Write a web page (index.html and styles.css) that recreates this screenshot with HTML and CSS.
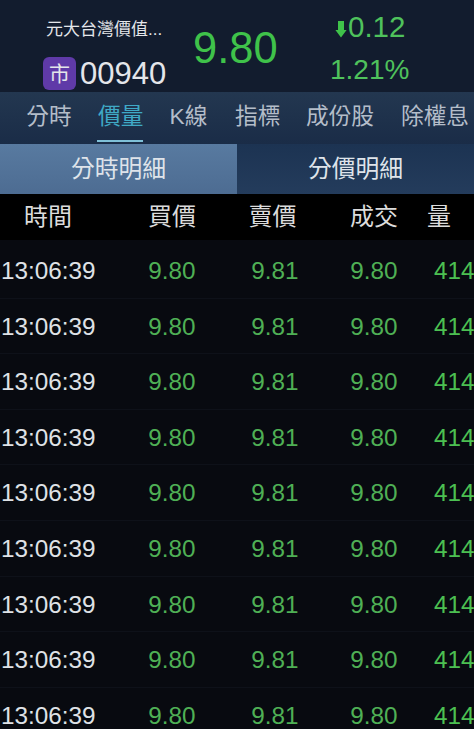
FILE: index.html
```html
<!DOCTYPE html>
<html lang="zh-Hant">
<head>
    <meta charset="UTF-8">
    <meta name="viewport" content="width=device-width, initial-scale=1.0">
    <title>00940</title>
    <link rel="stylesheet" href="styles.css">
</head>
<body>
    <div class="quote-header">
        <div class="stock-info">
            <div class="stock-name">元大台灣價值...</div>
            <div class="stock-code"><span class="market-badge">市</span>00940</div>
        </div>
        <div class="last-price">9.80</div>
        <div class="price-change">
            <div class="change-value">
                <svg class="down-arrow" viewBox="0 0 12 18" width="12" height="18"><path d="M3 1h6v9h2.6L6 17.5.4 10H3z" fill="#3fc24a"/></svg>0.12
            </div>
            <div>1.21%</div>
        </div>
    </div>

    <div class="main-tabs">
        <div class="main-tab tab-1">分時</div>
        <div class="main-tab tab-2 active">價量</div>
        <div class="main-tab tab-3">K線</div>
        <div class="main-tab tab-4">指標</div>
        <div class="main-tab tab-5">成份股</div>
        <div class="main-tab tab-6">除權息</div>
    </div>

    <div class="sub-tabs">
        <div class="sub-tab active">分時明細</div>
        <div class="sub-tab">分價明細</div>
    </div>

    <div class="table-head">
        <div class="col-time">時間</div>
        <div>買價</div>
        <div class="col-sell">賣價</div>
        <div>成交</div>
        <div class="col-vol">量</div>
    </div>

    <div class="table-body" id="rows"></div>

    <script>
        const rows = document.getElementById('rows');
        for (let i = 0; i < 9; i++) {
            const row = document.createElement('div');
            row.className = 'table-row';
            row.innerHTML = '<div class="col-time">13:06:39</div><div>9.80</div><div>9.81</div><div>9.80</div><div class="col-vol">414</div>';
            rows.appendChild(row);
        }
    </script>
</body>
</html>
```

FILE: styles.css
```css
body {
    margin: 0;
    width: 474px;
    height: 729px;
    overflow: hidden;
    background: #080a10;
    font-family: "Liberation Sans", "Noto Sans CJK TC", sans-serif;
    color: #e4e6ea;
}

.quote-header {
    height: 92px;
    display: flex;
    background: #121c2e;
    box-sizing: border-box;
}

.stock-info {
    width: 178px;
    flex-shrink: 0;
    padding: 20px 0 0 43px;
    box-sizing: border-box;
}

.stock-name {
    font-size: 17px;
    line-height: 20px;
    white-space: nowrap;
    padding-left: 3px;
}

.stock-code {
    display: flex;
    align-items: center;
    margin-top: 17px;
    font-size: 31px;
    line-height: 33px;
}

.market-badge {
    width: 33px;
    height: 33px;
    margin-right: 4px;
    border-radius: 6px;
    background: #5f3aa8;
    font-size: 21px;
    line-height: 33px;
    text-align: center;
}

.last-price {
    width: 128px;
    padding: 23px 0 0 15px;
    box-sizing: border-box;
    font-size: 43.5px;
    line-height: 50px;
    color: #3fc24a;
}

.price-change {
    flex: 1;
    padding-top: 9px;
    font-size: 28px;
    line-height: 36px;
    color: #4fc25c;
    padding-left: 24px;
}

.change-value {
    display: flex;
    align-items: center;
    padding-left: 5px;
    margin-bottom: 7px;
    font-size: 29.5px;
}

.down-arrow {
    margin: 3px 1px 0 0;
}

.main-tabs {
    height: 52px;
    display: flex;
    align-items: center;
    box-sizing: border-box;
    background: linear-gradient(#233750, #1a2c47);
    padding-bottom: 4px;
    font-size: 22.7px;
    color: #b4bdc9;
}

.main-tab {
    text-align: center;
    white-space: nowrap;
    position: relative;
    height: 34px;
    line-height: 34px;
}

.tab-1 { width: 98px; }
.tab-2 { width: 44px; }
.tab-3 { width: 93px; }
.tab-4 { width: 44px; }
.tab-5 { width: 122px; }
.tab-6 { width: 68px; }

.main-tab.active {
    color: #3fa9c6;
}

.main-tab.active::after {
    content: "";
    position: absolute;
    left: -1px;
    right: -1px;
    bottom: -9px;
    height: 2px;
    background: #7fc0d8;
}

.sub-tabs {
    height: 50px;
    display: flex;
}

.sub-tab {
    flex: 1;
    text-align: center;
    font-size: 23.8px;
    line-height: 50px;
    background: linear-gradient(#1c3352, #243c5c);
    color: #dfe4ea;
}

.sub-tab.active {
    background: linear-gradient(#587aa0, #4d6c92);
}

.table-head,
.table-row {
    display: grid;
    grid-template-columns: 122px 100px 106px 92px 54px;
    text-align: center;
}

.table-head {
    height: 46px;
    background: #000;
    font-size: 24px;
    line-height: 46px;
    color: #dcdcdc;
}

.table-head .col-time {
    padding-left: 24px;
    text-align: left;
}

.table-head .col-sell {
    padding-right: 5px;
}

.table-head .col-vol {
    padding-left: 7px;
    text-align: left;
}

.table-body {
    padding-top: 3px;
}

.table-row {
    height: 55.6px;
    line-height: 55px;
    box-sizing: border-box;
    font-size: 24.3px;
    color: #4fb055;
    border-bottom: 1px solid #0e1119;
}

.table-row .col-time {
    padding-left: 1px;
    text-align: left;
    color: #dfe2e6;
}

.table-row .col-vol {
    padding-left: 14px;
    text-align: left;
    white-space: nowrap;
    color: #4cc052;
}
```
